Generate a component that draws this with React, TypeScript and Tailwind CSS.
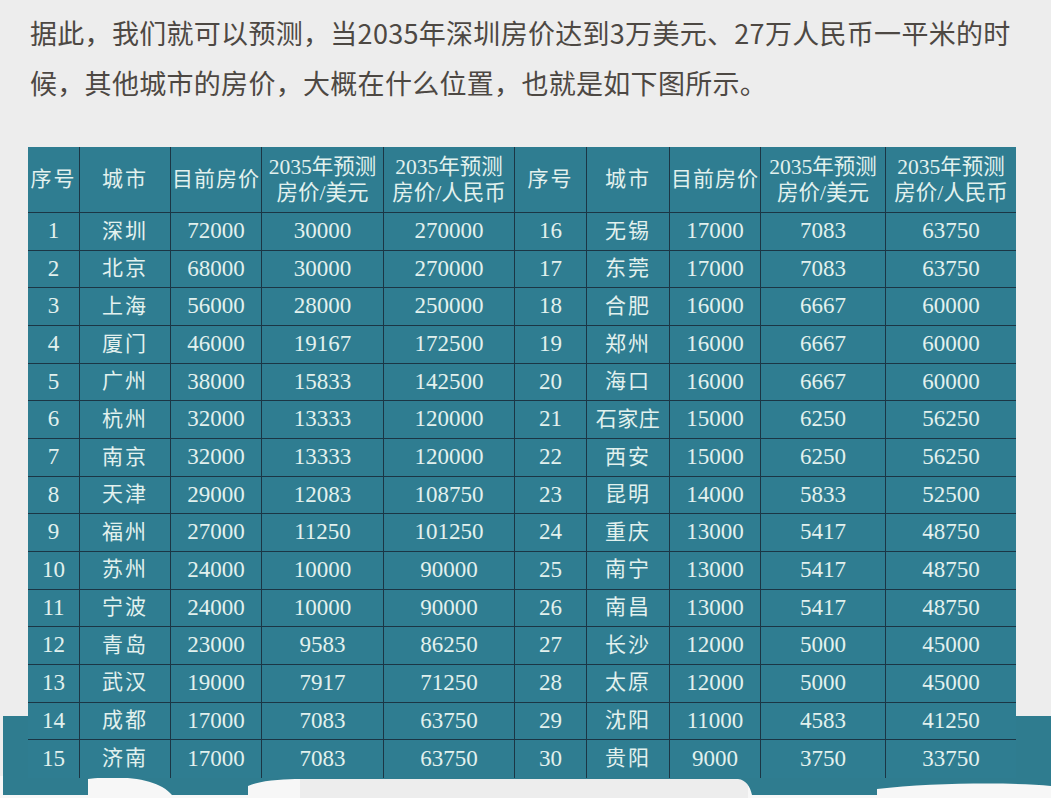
import React from "react";

type Row = [string, string, string, string, string];

const left: Row[] = [
  ["1", "深圳", "72000", "30000", "270000"],
  ["2", "北京", "68000", "30000", "270000"],
  ["3", "上海", "56000", "28000", "250000"],
  ["4", "厦门", "46000", "19167", "172500"],
  ["5", "广州", "38000", "15833", "142500"],
  ["6", "杭州", "32000", "13333", "120000"],
  ["7", "南京", "32000", "13333", "120000"],
  ["8", "天津", "29000", "12083", "108750"],
  ["9", "福州", "27000", "11250", "101250"],
  ["10", "苏州", "24000", "10000", "90000"],
  ["11", "宁波", "24000", "10000", "90000"],
  ["12", "青岛", "23000", "9583", "86250"],
  ["13", "武汉", "19000", "7917", "71250"],
  ["14", "成都", "17000", "7083", "63750"],
  ["15", "济南", "17000", "7083", "63750"],
];

const right: Row[] = [
  ["16", "无锡", "17000", "7083", "63750"],
  ["17", "东莞", "17000", "7083", "63750"],
  ["18", "合肥", "16000", "6667", "60000"],
  ["19", "郑州", "16000", "6667", "60000"],
  ["20", "海口", "16000", "6667", "60000"],
  ["21", "石家庄", "15000", "6250", "56250"],
  ["22", "西安", "15000", "6250", "56250"],
  ["23", "昆明", "14000", "5833", "52500"],
  ["24", "重庆", "13000", "5417", "48750"],
  ["25", "南宁", "13000", "5417", "48750"],
  ["26", "南昌", "13000", "5417", "48750"],
  ["27", "长沙", "12000", "5000", "45000"],
  ["28", "太原", "12000", "5000", "45000"],
  ["29", "沈阳", "11000", "4583", "41250"],
  ["30", "贵阳", "9000", "3750", "33750"],
];

const cols =
  "grid grid-cols-[52px_91px_91px_122px_131px_72px_83px_91px_125px_130px]";

function Cell({
  children,
  last,
  bottom,
  city,
  tight,
}: {
  children: React.ReactNode;
  last?: boolean;
  bottom?: boolean;
  city?: boolean;
  tight?: boolean;
}) {
  return (
    <div
      className={`flex items-center justify-center text-center whitespace-nowrap border-[#1b3645] ${
        last ? "" : "border-r"
      } ${bottom ? "" : "border-b"} ${city ? "tracking-[2px] text-[21px]" : ""} ${
        tight ? "tracking-[0.5px] text-[21px]" : ""
      }`}
    >
      {children}
    </div>
  );
}

function Header() {
  const two = (a: string, b: string) => (
    <div className="leading-[26px] text-[21.5px] whitespace-nowrap">
      <div>{a}</div>
      <div>{b}</div>
    </div>
  );
  const set = (lastSet: boolean) => [
    <Cell key="a" city>序号</Cell>,
    <Cell key="b" city>城市</Cell>,
    <Cell key="c">
      <span className="text-[21px] tracking-[1px] whitespace-nowrap">目前房价</span>
    </Cell>,
    <Cell key="d">{two("2035年预测", "房价/美元")}</Cell>,
    <Cell key="e" last={lastSet}>
      {two("2035年预测", "房价/人民币")}
    </Cell>,
  ];
  return (
    <div className={`${cols} h-[66px]`}>
      {set(false)}
      {set(true)}
    </div>
  );
}

export default function App() {
  return (
    <div className="relative w-[1051px] h-[798px] overflow-hidden bg-[#ededed]">
      {/* 背后那张截图的残边 */}
      <svg
        className="absolute left-0 top-[700px] z-0"
        width="1051"
        height="98"
        viewBox="0 0 1051 98"
      >
        <rect x="0" y="76" width="1051" height="22" fill="#f7f7f7" />
        <rect x="300" y="76" width="448" height="22" fill="#ededed" />
        <path
          d="M3 16 H1051 V86 C1010 82 930 83 877 89 V95 H752 C750 86 746 80 738 79 H300 C285 79 262 80 248 86 V95 H172 C160 80 125 74 88 79 V95 H3 Z"
          fill="#2f7c8f"
        />
      </svg>

      <p className="relative z-10 pl-[30px] pt-[8px] text-[27px] leading-[50px] tracking-[0.3px] text-[#4d4843] whitespace-nowrap font-['Noto_Sans_CJK_SC','Noto_Sans',sans-serif]">
        据此，我们就可以预测，当2035年深圳房价达到3万美元、27万人民币一平米的时
        <br />
        候，其他城市的房价，大概在什么位置，也就是如下图所示。
      </p>

      <div className="relative z-10 ml-[28px] mt-[39px] w-[988px] bg-[#2f7d91] text-[#e2f1ee] text-[23px] font-['Liberation_Serif','Noto_Sans_CJK_SC',serif]">
        <Header />
        {left.map((l, i) => {
          const r = right[i];
          const bottom = i === left.length - 1;
          return (
            <div key={l[0]} className={`${cols} h-[37.67px]`}>
              {l.map((v, j) => (
                <Cell key={"l" + j} bottom={bottom} city={j === 1}>
                  {v}
                </Cell>
              ))}
              {r.map((v, j) => (
                <Cell
                  key={"r" + j}
                  bottom={bottom}
                  last={j === 4}
                  city={j === 1 && v.length < 3}
                  tight={j === 1 && v.length >= 3}
                >
                  {v}
                </Cell>
              ))}
            </div>
          );
        })}
      </div>
    </div>
  );
}
